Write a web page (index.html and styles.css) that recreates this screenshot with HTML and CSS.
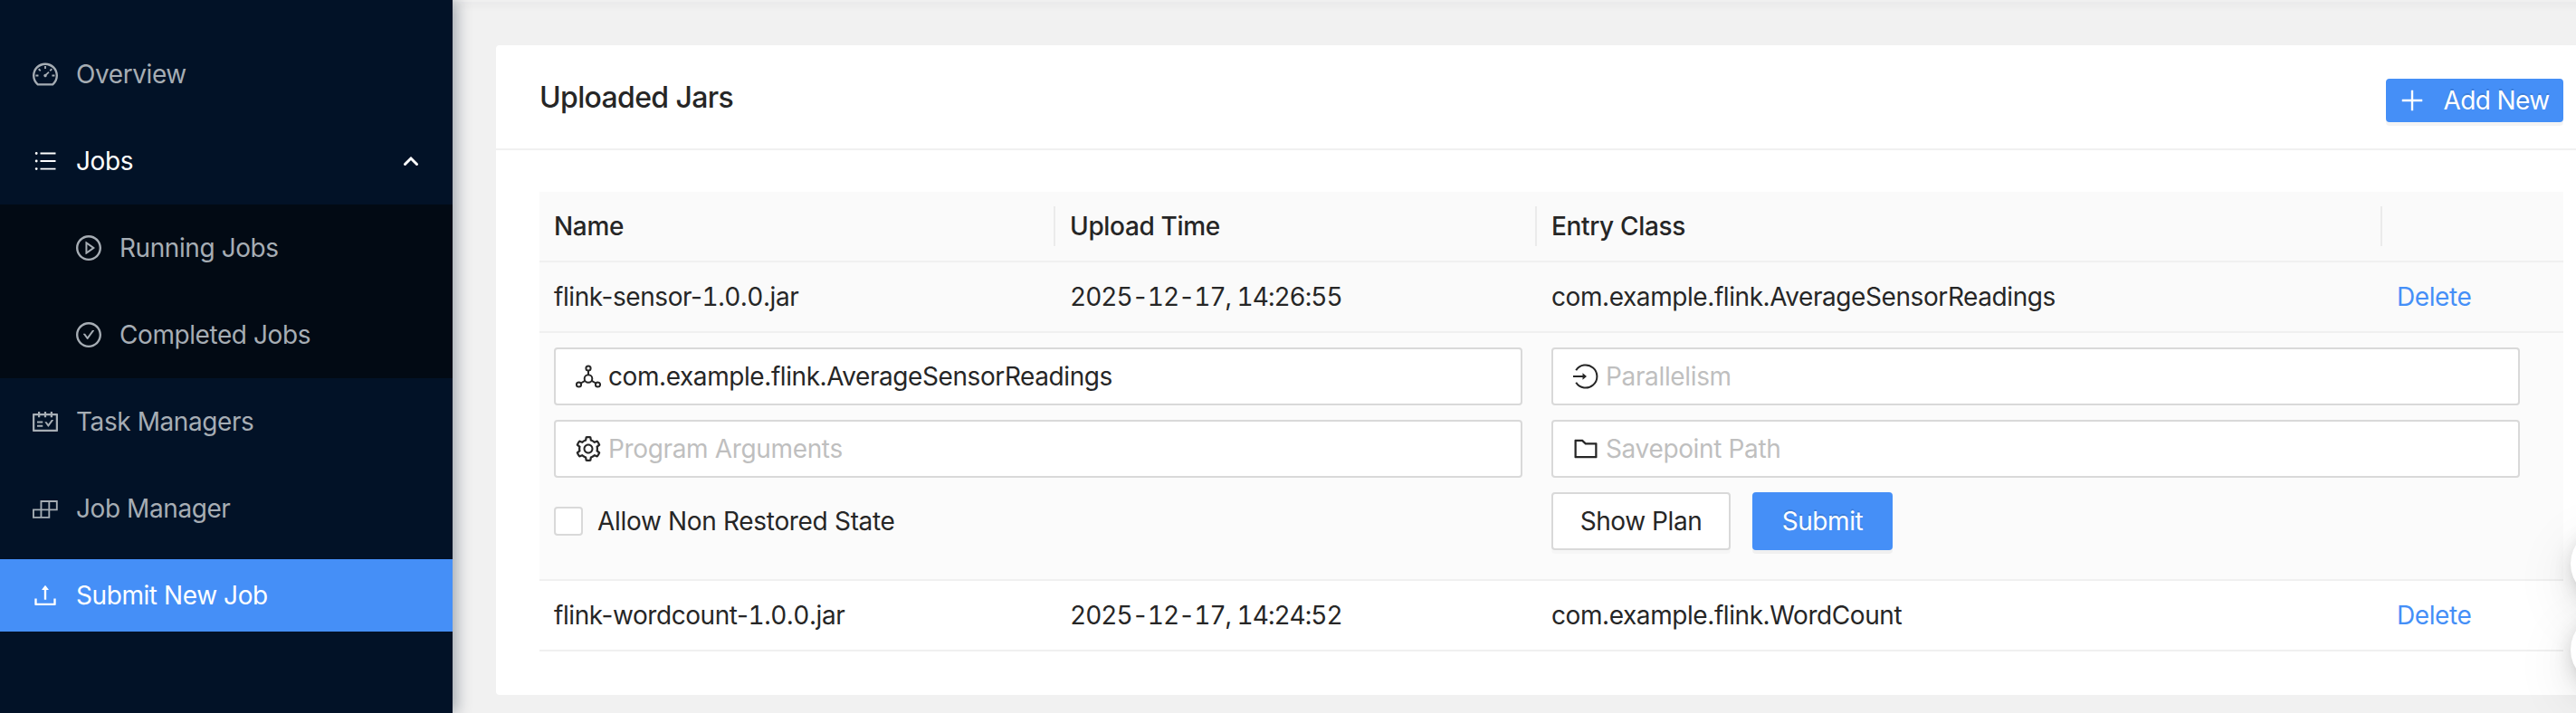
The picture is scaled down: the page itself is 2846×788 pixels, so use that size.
FILE: index.html
```html
<!DOCTYPE html>
<html lang="en">
<head>
  <meta charset="UTF-8">
  <title>Apache Flink Web Dashboard</title>
  <link rel="stylesheet" href="styles.css">
</head>
<body>

<div class="layout">

  <!-- Sidebar -->
  <aside class="sidebar">
    <a class="menu-item">
      <svg class="icon" viewBox="64 64 896 896"><path d="M924.8 385.6a446.7 446.7 0 0 0-96-142.4 446.7 446.7 0 0 0-142.4-96C631.1 123.8 572.5 112 512 112s-119.1 11.8-174.4 35.200a446.700 446.700 0 0 0-142.400 96 446.700 446.700 0 0 0-96 142.400C75.800 440.900 64 499.500 64 560c0 132.700 58.300 257.700 159.900 343.100l1.700 1.400c5.800 4.800 13.100 7.500 20.600 7.500h531.700c7.500 0 14.800-2.700 20.600-7.500l1.700-1.400C901.700 817.700 960 692.700 960 560c0-60.500-11.900-119.100-35.200-174.400zM761.400 836H262.600A371.120 371.120 0 0 1 140 560c0-99.400 38.700-192.800 109-263 70.300-70.300 163.700-109 263-109 99.400 0 192.800 38.700 263 109 70.300 70.300 109 163.700 109 263 0 105.600-44.500 205.500-122.600 276zM623.500 421.500a8.030 8.030 0 0 0-11.300 0L527.700 506c-18.700-5-39.400-.2-54.100 14.500a55.950 55.950 0 0 0 0 79.200 55.950 55.950 0 0 0 79.200 0 55.870 55.870 0 0 0 14.500-54.100l84.500-84.500c3.100-3.100 3.100-8.200 0-11.300l-28.300-28.300zM490 320h44c4.400 0 8-3.600 8-8v-80c0-4.400-3.600-8-8-8h-44c-4.400 0-8 3.600-8 8v80c0 4.400 3.600 8 8 8zm260 218v44c0 4.400 3.600 8 8 8h80c4.400 0 8-3.600 8-8v-44c0-4.400-3.600-8-8-8h-80c-4.400 0-8 3.600-8 8zm12.700-197.200l-31.100-31.100a8.030 8.030 0 0 0-11.300 0l-56.600 56.600a8.030 8.030 0 0 0 0 11.300l31.100 31.100c3.100 3.100 8.200 3.100 11.300 0l56.600-56.600c3.100-3.100 3.100-8.200 0-11.300zm-458.600-31.100a8.030 8.030 0 0 0-11.300 0l-31.100 31.100a8.030 8.030 0 0 0 0 11.300l56.600 56.600c3.100 3.100 8.200 3.100 11.300 0l31.100-31.100c3.100-3.100 3.100-8.200 0-11.300l-56.600-56.600zM262 530h-80c-4.400 0-8 3.600-8 8v44c0 4.400 3.600 8 8 8h80c4.400 0 8-3.600 8-8v-44c0-4.400-3.600-8-8-8z"/></svg>
      <span class="label">Overview</span>
    </a>
    <a class="menu-item open">
      <svg class="icon" viewBox="64 64 896 896"><path d="M872 208H344c-4.400 0-8 3.600-8 8v44c0 4.400 3.600 8 8 8h528c4.400 0 8-3.600 8-8v-44c0-4.400-3.600-8-8-8zm0 274H344c-4.400 0-8 3.600-8 8v44c0 4.400 3.600 8 8 8h528c4.400 0 8-3.600 8-8v-44c0-4.400-3.600-8-8-8zm0 274H344c-4.400 0-8 3.600-8 8v44c0 4.400 3.600 8 8 8h528c4.400 0 8-3.600 8-8v-44c0-4.400-3.600-8-8-8zM152 238a46 46 0 1 0 92 0 46 46 0 1 0-92 0zm0 274a46 46 0 1 0 92 0 46 46 0 1 0-92 0zm0 274a46 46 0 1 0 92 0 46 46 0 1 0-92 0z"/></svg>
      <span class="label">Jobs</span>
      <svg class="arrow" viewBox="0 0 18 12"><path d="M2.500 9.500 9 3l6.500 6.500"/></svg>
    </a>
    <div class="submenu">
      <a class="menu-item">
        <svg class="icon" viewBox="64 64 896 896"><path d="M512 64C264.600 64 64 264.600 64 512s200.600 448 448 448 448-200.600 448-448S759.400 64 512 64zm0 820c-205.400 0-372-166.600-372-372s166.600-372 372-372 372 166.600 372 372-166.600 372-372 372z"/><path d="M719.400 499.100l-296.100-215A15.900 15.900 0 0 0 398 297v430c0 13.100 14.800 20.500 25.300 12.900l296.100-215a15.900 15.900 0 0 0 0-25.800zm-257.600 134V390.900L628.500 512 461.800 633.100z"/></svg>
        <span class="label">Running Jobs</span>
      </a>
      <a class="menu-item">
        <svg class="icon" viewBox="64 64 896 896"><path d="M699 353h-46.900c-10.200 0-19.900 4.900-25.900 13.300L469 584.300l-71.200-98.800c-6-8.300-15.600-13.300-25.900-13.300H325c-6.500 0-10.300 7.400-6.500 12.700l124.600 172.800a31.800 31.800 0 0 0 51.700 0l210.600-292c3.900-5.300.1-12.700-6.400-12.700z"/><path d="M512 64C264.600 64 64 264.600 64 512s200.600 448 448 448 448-200.600 448-448S759.400 64 512 64zm0 820c-205.400 0-372-166.600-372-372s166.600-372 372-372 372 166.600 372 372-166.600 372-372 372z"/></svg>
        <span class="label">Completed Jobs</span>
      </a>
    </div>
    <a class="menu-item">
      <svg class="icon" viewBox="64 64 896 896"><path d="M928 224H768v-56c0-4.400-3.600-8-8-8h-56c-4.400 0-8 3.600-8 8v56H548v-56c0-4.400-3.600-8-8-8h-56c-4.400 0-8 3.600-8 8v56H328v-56c0-4.400-3.600-8-8-8h-56c-4.400 0-8 3.600-8 8v56H96c-17.700 0-32 14.300-32 32v576c0 17.700 14.300 32 32 32h832c17.700 0 32-14.300 32-32V256c0-17.700-14.300-32-32-32zm-40 568H136V296h120v56c0 4.400 3.600 8 8 8h56c4.400 0 8-3.600 8-8v-56h148v56c0 4.400 3.600 8 8 8h56c4.400 0 8-3.600 8-8v-56h148v56c0 4.400 3.600 8 8 8h56c4.400 0 8-3.600 8-8v-56h120v496zM416 496H232c-4.400 0-8 3.600-8 8v48c0 4.400 3.600 8 8 8h184c4.400 0 8-3.600 8-8v-48c0-4.400-3.600-8-8-8zm0 136H232c-4.400 0-8 3.600-8 8v48c0 4.400 3.600 8 8 8h184c4.400 0 8-3.600 8-8v-48c0-4.400-3.600-8-8-8zm308.200-177.400L620.600 598.300l-52.800-73.100c-3-4.200-7.800-6.600-12.900-6.600H500c-6.500 0-10.300 7.400-6.500 12.700l114.100 158.200a15.900 15.900 0 0 0 25.800 0l165-228.700c3.800-5.300 0-12.700-6.500-12.700H737c-5-.1-9.800 2.400-12.800 6.500z"/></svg>
      <span class="label">Task Managers</span>
    </a>
    <a class="menu-item">
      <svg class="icon" viewBox="64 64 896 896"><path d="M944 224H344c-4.400 0-8 3.600-8 8v292H72c-4.400 0-8 3.600-8 8v316c0 4.400 3.600 8 8 8h600c4.400 0 8-3.600 8-8V584h264c4.400 0 8-3.600 8-8V232c0-4.400-3.600-8-8-8zM336 796H124V584h212v212zm284 0H396V584h224v212zm0-272H396V284h224v240zm272 0H680V284h212v240z"/></svg>
      <span class="label">Job Manager</span>
    </a>
    <a class="menu-item selected">
      <svg class="icon" viewBox="64 64 896 896"><path d="M400 317.700h73.900V656c0 4.400 3.600 8 8 8h60c4.400 0 8-3.600 8-8V317.700H624c6.700 0 10.400-7.700 6.300-12.900L518.300 163a8 8 0 0 0-12.600 0l-112 141.700c-4.100 5.300-.4 13 6.300 13zM878 626h-60c-4.400 0-8 3.600-8 8v154H214V634c0-4.400-3.600-8-8-8h-60c-4.400 0-8 3.600-8 8v198c0 17.700 14.300 32 32 32h684c17.700 0 32-14.300 32-32V634c0-4.400-3.600-8-8-8z"/></svg>
      <span class="label">Submit New Job</span>
    </a>
  </aside>

  <!-- Content -->
  <main class="content">
    <div class="topbar"></div>
    <section class="card">
      <div class="card-head">
        <h1 class="title">Uploaded Jars</h1>
        <button class="btn primary small">
          <svg class="icon" viewBox="64 64 896 896"><path d="M482 152h60q8 0 8 8v704q0 8-8 8h-60q-8 0-8-8V160q0-8 8-8z"/><path d="M160 474h704q8 0 8 8v60q0 8-8 8H160q-8 0-8-8v-60q0-8 8-8z"/></svg>
          <span class="label">Add New</span>
        </button>
      </div>

      <div class="table">
        <div class="row head">
          <div class="cell">Name</div>
          <div class="cell">Upload Time</div>
          <div class="cell">Entry Class</div>
          <div class="cell"></div>
        </div>
        <div class="row active">
          <div class="cell">flink-sensor-<span class="version">1.0.0</span>.jar</div>
          <div class="cell time">2025-12-17, 14:26:55</div>
          <div class="cell">com.example.flink.AverageSensorReadings</div>
          <div class="cell"><a class="link">Delete</a></div>
        </div>

        <!-- Submit form of the opened jar -->
        <form class="expanded">
          <div class="input">
            <svg class="icon line" viewBox="0 0 28 28"><circle cx="14" cy="5" r="2.600"/><circle cx="14" cy="16.500" r="4.300"/><circle cx="3.500" cy="23" r="2.600"/><circle cx="24.500" cy="23" r="2.600"/><path d="M14 7.600v4.600M10.200 18.800l-4.400 2.700M17.800 18.800l4.400 2.700"/></svg>
            <span class="value">com.example.flink.AverageSensorReadings</span>
          </div>
          <div class="input">
            <svg class="icon line" viewBox="0 0 28 28"><path d="M3.200 7.200a12.600 12.600 0 1 1 0 13.600"/><path d="M0 14h12"/><path class="fill" d="M10.500 10.200 15 14l-4.500 3.800z"/></svg>
            <span class="placeholder">Parallelism</span>
          </div>
          <div class="input">
            <svg class="icon" viewBox="64 64 896 896"><path d="M924.800 625.700l-65.500-56c3.100-19 4.700-38.400 4.700-57.800s-1.600-38.800-4.700-57.800l65.500-56a32.030 32.030 0 0 0 9.300-35.200l-.9-2.600a443.740 443.740 0 0 0-79.700-137.900l-1.800-2.100a32.120 32.120 0 0 0-35.100-9.500l-81.300 28.900c-30-24.600-63.500-44-99.700-57.600l-15.700-85a32.050 32.050 0 0 0-25.800-25.700l-2.700-.5c-52.100-9.400-106.900-9.400-159 0l-2.700.5a32.050 32.050 0 0 0-25.800 25.700l-15.800 85.400a351.860 351.860 0 0 0-99 57.400l-81.900-29.100a32 32 0 0 0-35.100 9.500l-1.800 2.100a446.020 446.020 0 0 0-79.700 137.900l-.9 2.600c-4.500 12.500-.8 26.500 9.300 35.200l66.300 56.600c-3.100 18.800-4.600 38-4.600 57.100 0 19.200 1.500 38.400 4.600 57.100L99 625.500a32.030 32.030 0 0 0-9.300 35.200l.9 2.600c18.100 50.400 44.900 96.900 79.700 137.900l1.800 2.100a32.120 32.120 0 0 0 35.100 9.500l81.900-29.100c29.800 24.500 63.100 43.900 99 57.400l15.800 85.400a32.050 32.050 0 0 0 25.800 25.700l2.700.5a449.400 449.400 0 0 0 159 0l2.700-.5a32.050 32.050 0 0 0 25.800-25.700l15.700-85a350 350 0 0 0 99.700-57.600l81.300 28.900a32 32 0 0 0 35.100-9.500l1.800-2.100c34.800-41.100 61.600-87.500 79.700-137.900l.9-2.600c4.500-12.300.8-26.300-9.300-35zM788.300 465.900c2.500 15.100 3.800 30.600 3.800 46.100s-1.300 31-3.800 46.100l-6.600 40.100 74.700 63.900a370.030 370.030 0 0 1-42.600 73.600L721 702.800l-31.400 25.800c-23.900 19.600-50.500 35-79.300 45.800l-38.100 14.300-17.900 97a377.500 377.500 0 0 1-85 0l-17.900-97.200-37.800-14.500c-28.500-10.800-55-26.200-78.700-45.700l-31.400-25.900-93.400 33.200c-17-22.900-31.200-47.600-42.600-73.600l75.500-64.500-6.500-40c-2.400-14.900-3.700-30.300-3.700-45.500 0-15.300 1.200-30.600 3.700-45.500l6.500-40-75.500-64.500c11.300-26.100 25.600-50.700 42.600-73.600l93.400 33.200 31.400-25.900c23.700-19.500 50.200-34.900 78.700-45.700l37.900-14.300 17.900-97.200c28.100-3.200 56.800-3.200 85 0l17.900 97 38.100 14.300c28.700 10.800 55.400 26.200 79.300 45.800l31.400 25.800 92.800-32.900c17 22.900 31.200 47.600 42.600 73.600L781.800 426l6.500 39.900zM512 336c-97.200 0-176 78.800-176 176s78.800 176 176 176 176-78.800 176-176-78.800-176-176-176zm79.200 255.200A111.600 111.600 0 0 1 512 624c-29.900 0-58-11.700-79.200-32.800A111.600 111.600 0 0 1 400 512c0-29.900 11.700-58 32.800-79.200C454 411.600 482.100 400 512 400c29.900 0 58 11.600 79.200 32.800A111.600 111.600 0 0 1 624 512c0 29.900-11.700 58-32.800 79.200z"/></svg>
            <span class="placeholder">Program Arguments</span>
          </div>
          <div class="input">
            <svg class="icon" viewBox="64 64 896 896"><path d="M880 298.400H521L403.700 186.200a8.150 8.150 0 0 0-5.500-2.200H144c-17.700 0-32 14.300-32 32v592c0 17.700 14.300 32 32 32h736c17.700 0 32-14.300 32-32V330.400c0-17.700-14.300-32-32-32zM840 768H184V256h188.500l119.600 114.400H840V768z"/></svg>
            <span class="placeholder">Savepoint Path</span>
          </div>
          <label class="check">
            <span class="box"></span>
            <span class="label">Allow Non Restored State</span>
          </label>
          <div class="actions">
            <button type="button" class="btn plan"><span class="label">Show Plan</span></button>
            <button type="button" class="btn primary submit"><span class="label">Submit</span></button>
          </div>
        </form>

        <div class="row">
          <div class="cell">flink-wordcount-<span class="version">1.0.0</span>.jar</div>
          <div class="cell time">2025-12-17, 14:24:52</div>
          <div class="cell">com.example.flink.WordCount</div>
          <div class="cell"><a class="link">Delete</a></div>
        </div>
      </div>
    </section>
  </main>
</div>

<!-- Floating buttons, cut off by the right edge -->
<div class="float-btns">
  <span class="float-btn"></span>
  <span class="float-btn"></span>
</div>

</body>
</html>
```
FILE: styles.css
```css
* {
  box-sizing: border-box;
}

html, body {
  margin: 0;
  padding: 0;
  height: 100%;
  overflow: hidden;
  background: #f1f1f1;
  color: #262626;
  font-family: Inter, "Liberation Sans", sans-serif;
  font-size: 28px;
  line-height: 44px;
  letter-spacing: -0.42px;
}

.layout {
  display: flex;
  height: 788px;
}

.icon {
  width: 28px;
  height: 28px;
  flex: none;
  fill: currentColor;
}

.icon.line {
  fill: none;
  stroke: currentColor;
  stroke-width: 2;
}

.icon.line .fill {
  fill: currentColor;
  stroke: none;
}

/* sidebar */
.sidebar {
  width: 500px;
  flex: none;
  padding-top: 34px;
  background: #021227;
  box-shadow: 4px 0 16px rgba(0, 21, 41, 0.35);
  z-index: 2;
}

.menu-item {
  display: flex;
  align-items: center;
  gap: 20px;
  height: 80px;
  margin: 8px 0 16px;
  padding: 0 36px;
  color: #a6adb4;
}

.menu-item.open {
  color: #fff;
  margin-bottom: 8px;
}

.menu-item.selected {
  background: #458ff7;
  color: #fff;
}

.menu-item .arrow {
  width: 18px;
  height: 12px;
  margin-left: auto;
  margin-right: 1px;
  fill: none;
  stroke: #fff;
  stroke-width: 3;
  stroke-linecap: round;
}

.submenu {
  padding: 8px 0;
  margin-bottom: 8px;
  background: #020a14;
}

.submenu .menu-item {
  margin: 0;
  padding-left: 84px;
}

.submenu .menu-item + .menu-item {
  margin-top: 16px;
}

/* content */
.content {
  flex: none;
  width: 2394px;
}

.topbar {
  height: 2px;
  margin-bottom: 48px;
  background: #f0f0f0;
  box-shadow: 0 2px 10px rgba(0, 21, 41, 0.14);
}

.card {
  height: 718px;
  margin-left: 48px;
  background: #fff;
  border-radius: 4px;
}

.card-head {
  display: flex;
  align-items: center;
  justify-content: space-between;
  height: 116px;
  padding: 8px 62px 0 48px;
  border-bottom: 2px solid #f0f0f0;
}

.title {
  margin: 0 0 6px;
  font-size: 32px;
  font-weight: 500;
  letter-spacing: -0.65px;
}

.table {
  width: 2236px;
  margin: 46px 0 0 48px;
}

.row {
  display: grid;
  grid-template-columns: 570px 532px 934px 200px;
  align-items: center;
  height: 78px;
  border-bottom: 2px solid #f0f0f0;
}

.row .cell {
  padding: 0 16px;
  white-space: nowrap;
}

.row .time {
  font-variant-numeric: tabular-nums;
  letter-spacing: -1px;
}

.row .version {
  font-variant-numeric: tabular-nums;
}

.row.head {
  background: #fafafa;
  font-weight: 500;
  letter-spacing: -0.35px;
}

.row.head .cell {
  height: 44px;
}

.row.head .cell:not(:last-child) {
  border-right: 2px solid #ebebeb;
}

.row.active {
  background: #fafafa;
}

.link {
  color: #458ff7;
}

.expanded {
  display: grid;
  grid-template-columns: 1070px 1070px;
  grid-auto-rows: 64px;
  gap: 16px 32px;
  height: 274px;
  padding: 16px;
  background: #fbfbfb;
  border-bottom: 2px solid #f0f0f0;
}

.input {
  display: flex;
  align-items: center;
  gap: 8px;
  padding: 0 22px;
  background: #fff;
  border: 2px solid #d9d9d9;
  border-radius: 4px;
}

.placeholder {
  color: #bfbfbf;
  letter-spacing: -0.35px;
}

.check {
  display: flex;
  align-items: center;
  gap: 16px;
  letter-spacing: -0.32px;
}

.check .box {
  width: 32px;
  height: 32px;
  background: #fff;
  border: 2px solid #d9d9d9;
  border-radius: 4px;
}

.actions {
  display: flex;
  gap: 24px;
}

.btn {
  display: flex;
  align-items: center;
  justify-content: center;
  height: 64px;
  padding: 0;
  background: #fff;
  border: 2px solid #d9d9d9;
  border-radius: 4px;
  box-shadow: 0 4px 0 rgba(0, 0, 0, 0.02);
  color: #262626;
  font: inherit;
  letter-spacing: inherit;
}

.btn.primary {
  background: #458ff7;
  border-color: #458ff7;
  box-shadow: 0 4px 0 rgba(0, 0, 0, 0.045);
  color: #fff;
  text-shadow: 0 -2px 0 rgba(0, 0, 0, 0.12);
}

.btn.plan {
  width: 198px;
}

.btn.submit {
  width: 155px;
}

.btn.small {
  width: 196px;
  height: 48px;
  gap: 20px;
  letter-spacing: -0.6px;
}

/* floating buttons */
.float-btns {
  position: absolute;
  top: 583px;
  left: 2840px;
  display: flex;
  flex-direction: column;
  gap: 15px;
}

.float-btn {
  width: 80px;
  height: 80px;
  border-radius: 50%;
  background: #fff;
  box-shadow: 0 6px 12px -8px rgba(0, 0, 0, 0.12), 0 12px 32px rgba(0, 0, 0, 0.08), 0 18px 56px 16px rgba(0, 0, 0, 0.05), 0 4px 20px rgba(0, 0, 0, 0.1);
}
```
